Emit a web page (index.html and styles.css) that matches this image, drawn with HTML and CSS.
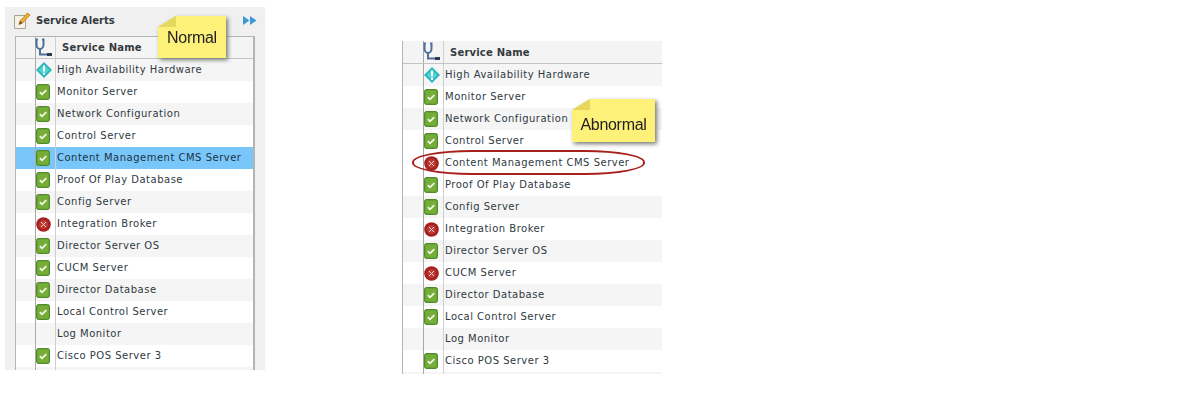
FILE: index.html
```html
<!DOCTYPE html>
<html lang="en">
<head>
    <meta charset="UTF-8">
    <title>Service Alerts</title>
    <link rel="stylesheet" href="styles.css">
</head>
<body>
    <svg class="defs" width="0" height="0">
        <defs>
            <symbol id="ok" viewBox="0 0 14 16">
                <rect x="0.500" y="0.500" width="13" height="15" rx="2" fill="#5c9a2e" stroke="#4f8a26"/>
                <rect x="1.500" y="1.500" width="11" height="13" rx="1" fill="#76ad3a"/>
                <path d="M3.800 8.200l2.200 2.200 4.300-4.300" fill="none" stroke="#f2f8e8" stroke-width="1.700"/>
            </symbol>
            <symbol id="bad" viewBox="0 0 15 15">
                <circle cx="7.500" cy="7.500" r="7.300" fill="#a8201d"/>
                <circle cx="7.500" cy="7.500" r="4.500" fill="#bd3a35"/>
                <path d="M5 5l5 5M10 5l-5 5" fill="none" stroke="#f3d6d2" stroke-width="1"/>
            </symbol>
            <symbol id="info" viewBox="0 0 16 16">
                <path d="M8 0l8 8-8 8-8-8z" fill="#27b5bd"/>
                <path d="M8 2.500L13.500 8 8 13.500 2.500 8z" fill="#52d3d3"/>
                <path d="M8 3.500v6M8 10.800v2" fill="none" stroke="#fff" stroke-width="2"/>
            </symbol>
            <symbol id="scope" viewBox="0 0 18 20">
                <path d="M3 1.500H1.500v5c0 3 2 4.500 3.500 4.500s3.500-1.500 3.500-4.500v-5H7" fill="none" stroke="#4d6f9c" stroke-width="2"/>
                <path d="M5 11v5.500h8" fill="none" stroke="#4d6f9c" stroke-width="2"/>
                <path d="M12 15h5v3h-5z" fill="#2b3a4c"/>
            </symbol>
        </defs>
    </svg>

    <div class="page">
        <section class="panel">
            <div class="panel-title">
                <svg class="title-icon" viewBox="0 0 18 18" width="18" height="18">
                    <path d="M1.500 3.500h11v13h-11z" fill="#f4f1e6" stroke="#a9a595"/>
                    <path d="M6 12.500l1-3.500 7.500-8 2.500 2-7.500 8z" fill="#f0b02e" stroke="#b5751c" stroke-width="0.800"/>
                    <path d="M6 12.500l1-3.500 2.500 2z" fill="#6b4a20"/>
                </svg>
                <span class="title-text">Service Alerts</span>
                <svg class="title-arrows" viewBox="0 0 14 9" width="14" height="9">
                    <path d="M0 0l6.500 4.500L0 9zM7 0l6.500 4.500L7 9z" fill="#3a9ad9"/>
                </svg>
            </div>
            <div class="table table-boxed">
                <div class="row head">
                    <span class="c-blank"></span>
                    <span class="c-icon"><svg class="i-scope"><use href="#scope"/></svg></span>
                    <span class="c-name">Service Name</span>
                </div>
                <div class="row"><span class="c-blank"></span><span class="c-icon"><svg class="i-info"><use href="#info"/></svg></span><span class="c-name">High Availability Hardware</span></div>
                <div class="row"><span class="c-blank"></span><span class="c-icon"><svg class="i-ok"><use href="#ok"/></svg></span><span class="c-name">Monitor Server</span></div>
                <div class="row"><span class="c-blank"></span><span class="c-icon"><svg class="i-ok"><use href="#ok"/></svg></span><span class="c-name">Network Configuration</span></div>
                <div class="row"><span class="c-blank"></span><span class="c-icon"><svg class="i-ok"><use href="#ok"/></svg></span><span class="c-name">Control Server</span></div>
                <div class="row selected"><span class="c-blank"></span><span class="c-icon"><svg class="i-ok"><use href="#ok"/></svg></span><span class="c-name">Content Management CMS Server</span></div>
                <div class="row"><span class="c-blank"></span><span class="c-icon"><svg class="i-ok"><use href="#ok"/></svg></span><span class="c-name">Proof Of Play Database</span></div>
                <div class="row"><span class="c-blank"></span><span class="c-icon"><svg class="i-ok"><use href="#ok"/></svg></span><span class="c-name">Config Server</span></div>
                <div class="row"><span class="c-blank"></span><span class="c-icon"><svg class="i-bad"><use href="#bad"/></svg></span><span class="c-name">Integration Broker</span></div>
                <div class="row"><span class="c-blank"></span><span class="c-icon"><svg class="i-ok"><use href="#ok"/></svg></span><span class="c-name">Director Server OS</span></div>
                <div class="row"><span class="c-blank"></span><span class="c-icon"><svg class="i-ok"><use href="#ok"/></svg></span><span class="c-name">CUCM Server</span></div>
                <div class="row"><span class="c-blank"></span><span class="c-icon"><svg class="i-ok"><use href="#ok"/></svg></span><span class="c-name">Director Database</span></div>
                <div class="row"><span class="c-blank"></span><span class="c-icon"><svg class="i-ok"><use href="#ok"/></svg></span><span class="c-name">Local Control Server</span></div>
                <div class="row"><span class="c-blank"></span><span class="c-icon"></span><span class="c-name">Log Monitor</span></div>
                <div class="row"><span class="c-blank"></span><span class="c-icon"><svg class="i-ok"><use href="#ok"/></svg></span><span class="c-name">Cisco POS Server 3</span></div>
                <div class="row"><span class="c-blank"></span><span class="c-icon"></span><span class="c-name"></span></div>
            </div>
            <div class="note note-normal"><span class="note-text">Normal</span></div>
        </section>

        <section class="panel-plain">
            <div class="table table-open">
                <div class="row head">
                    <span class="c-blank"></span>
                    <span class="c-icon"><svg class="i-scope"><use href="#scope"/></svg></span>
                    <span class="c-name">Service Name</span>
                </div>
                <div class="row"><span class="c-blank"></span><span class="c-icon"><svg class="i-info"><use href="#info"/></svg></span><span class="c-name">High Availability Hardware</span></div>
                <div class="row"><span class="c-blank"></span><span class="c-icon"><svg class="i-ok"><use href="#ok"/></svg></span><span class="c-name">Monitor Server</span></div>
                <div class="row"><span class="c-blank"></span><span class="c-icon"><svg class="i-ok"><use href="#ok"/></svg></span><span class="c-name">Network Configuration</span></div>
                <div class="row"><span class="c-blank"></span><span class="c-icon"><svg class="i-ok"><use href="#ok"/></svg></span><span class="c-name">Control Server</span></div>
                <div class="row plain"><span class="c-blank"></span><span class="c-icon"><svg class="i-bad"><use href="#bad"/></svg></span><span class="c-name">Content Management CMS Server</span></div>
                <div class="row"><span class="c-blank"></span><span class="c-icon"><svg class="i-ok"><use href="#ok"/></svg></span><span class="c-name">Proof Of Play Database</span></div>
                <div class="row"><span class="c-blank"></span><span class="c-icon"><svg class="i-ok"><use href="#ok"/></svg></span><span class="c-name">Config Server</span></div>
                <div class="row"><span class="c-blank"></span><span class="c-icon"><svg class="i-bad"><use href="#bad"/></svg></span><span class="c-name">Integration Broker</span></div>
                <div class="row"><span class="c-blank"></span><span class="c-icon"><svg class="i-ok"><use href="#ok"/></svg></span><span class="c-name">Director Server OS</span></div>
                <div class="row"><span class="c-blank"></span><span class="c-icon"><svg class="i-bad"><use href="#bad"/></svg></span><span class="c-name">CUCM Server</span></div>
                <div class="row"><span class="c-blank"></span><span class="c-icon"><svg class="i-ok"><use href="#ok"/></svg></span><span class="c-name">Director Database</span></div>
                <div class="row"><span class="c-blank"></span><span class="c-icon"><svg class="i-ok"><use href="#ok"/></svg></span><span class="c-name">Local Control Server</span></div>
                <div class="row"><span class="c-blank"></span><span class="c-icon"></span><span class="c-name">Log Monitor</span></div>
                <div class="row"><span class="c-blank"></span><span class="c-icon"><svg class="i-ok"><use href="#ok"/></svg></span><span class="c-name">Cisco POS Server 3</span></div>
                <div class="row"><span class="c-blank"></span><span class="c-icon"></span><span class="c-name"></span></div>
            </div>
            <div class="note note-abnormal"><span class="note-text">Abnormal</span></div>
            <div class="ring"></div>
        </section>
    </div>
</body>
</html>
```

FILE: styles.css
```css
html, body {
    margin: 0;
    background: #fff;
}
.defs {
    position: absolute;
}
.page {
    display: flex;
    align-items: flex-start;
    padding-left: 5px;
    font-family: "DejaVu Sans", sans-serif;
    font-size: 10px;
    color: #2f3a3f;
}

/* left panel, grey frame round the table */
.panel {
    position: relative;
    width: 240px;
    height: 363px;
    margin-top: 7px;
    padding: 0 10px;
    background: #f0f0f0;
    overflow: hidden;
}
.panel-title {
    display: flex;
    align-items: center;
    height: 29px;
    margin-left: -2px;
    margin-right: -2px;
    padding-bottom: 2px;
    box-sizing: border-box;
}
.title-icon {
    margin-right: 5px;
}
.title-text {
    font-size: 10px;
    font-weight: bold;
    color: #33393d;
    flex-grow: 1;
}

/* right panel has no frame */
.panel-plain {
    position: relative;
    width: 260px;
    height: 333px;
    margin-top: 41px;
    margin-left: 137px;
    overflow: hidden;
}

.table {
    background: #fff;
}
.table-boxed {
    border: 1px solid #b4b4b4;
    border-bottom: 0;
    border-right: 2px solid #b4b4b4;
}
.table-open {
    border-left: 1px solid #b4b4b4;
}

.row {
    display: flex;
    height: 22px;
    letter-spacing: 0.5px;
    line-height: 21px;
}
.row:nth-child(even) {
    background: #f5f5f5;
}
.row.plain {
    background: #fff;
}
.row.selected {
    background: #79c6fb;
    color: #1d3340;
}
.row.head {
    background: #f4f4f4;
    border-bottom: 1px solid #c4c4c4;
    font-weight: bold;
    letter-spacing: 0.2px;
    color: #33393d;
}
.table-boxed .head {
    height: 21px;
}
.table-open .head {
    line-height: 23px;
}
.c-blank {
    width: 20px;
    flex-shrink: 0;
    border-right: 1px solid #a8a8a8;
}
.table-boxed .c-blank {
    width: 19px;
}
.c-icon {
    display: flex;
    align-items: center;
    width: 19px;
    flex-shrink: 0;
    border-right: 1px solid #cfcfcf;
}
.c-name {
    padding-left: 1px;
    white-space: nowrap;
}
.head .c-name {
    padding-left: 6px;
}
.i-ok {
    width: 14px;
    height: 16px;
}
.i-bad {
    width: 15px;
    height: 15px;
}
.i-info {
    width: 16px;
    height: 16px;
}
.i-scope {
    width: 18px;
    height: 20px;
    margin-left: -1px;
}

/* sticky notes and the marker ring lie over the tables */
.note {
    position: absolute;
    display: flex;
    align-items: center;
    justify-content: center;
    box-sizing: border-box;
    font-family: "Liberation Sans", sans-serif;
    font-size: 16px;
    letter-spacing: -0.3px;
    color: #222;
    filter: drop-shadow(2px 2px 2px #777);
}
.note::before {
    content: "";
    position: absolute;
    left: 0;
    top: 0;
    right: 0;
    bottom: 0;
    background: #fdf17a;
    clip-path: polygon(18px 0, 100% 0, 100% 100%, 0 100%, 0 11px);
}
.note::after {
    content: "";
    position: absolute;
    left: 0;
    top: 0;
    width: 18px;
    height: 11px;
    background: linear-gradient(to bottom right, transparent 49%, #e6d85e 50%);
}
.note-text {
    position: relative;
}
.note-normal {
    left: 153px;
    top: 9px;
    width: 68px;
    height: 42px;
    padding-top: 2px;
}
.note-abnormal {
    left: 170px;
    top: 58px;
    width: 83px;
    height: 43px;
    padding-top: 9px;
}
.ring {
    position: absolute;
    left: 10px;
    top: 109px;
    width: 233px;
    height: 25px;
    border: 2px solid #a8201d;
    border-radius: 60px / 12px;
    box-sizing: border-box;
}
```
